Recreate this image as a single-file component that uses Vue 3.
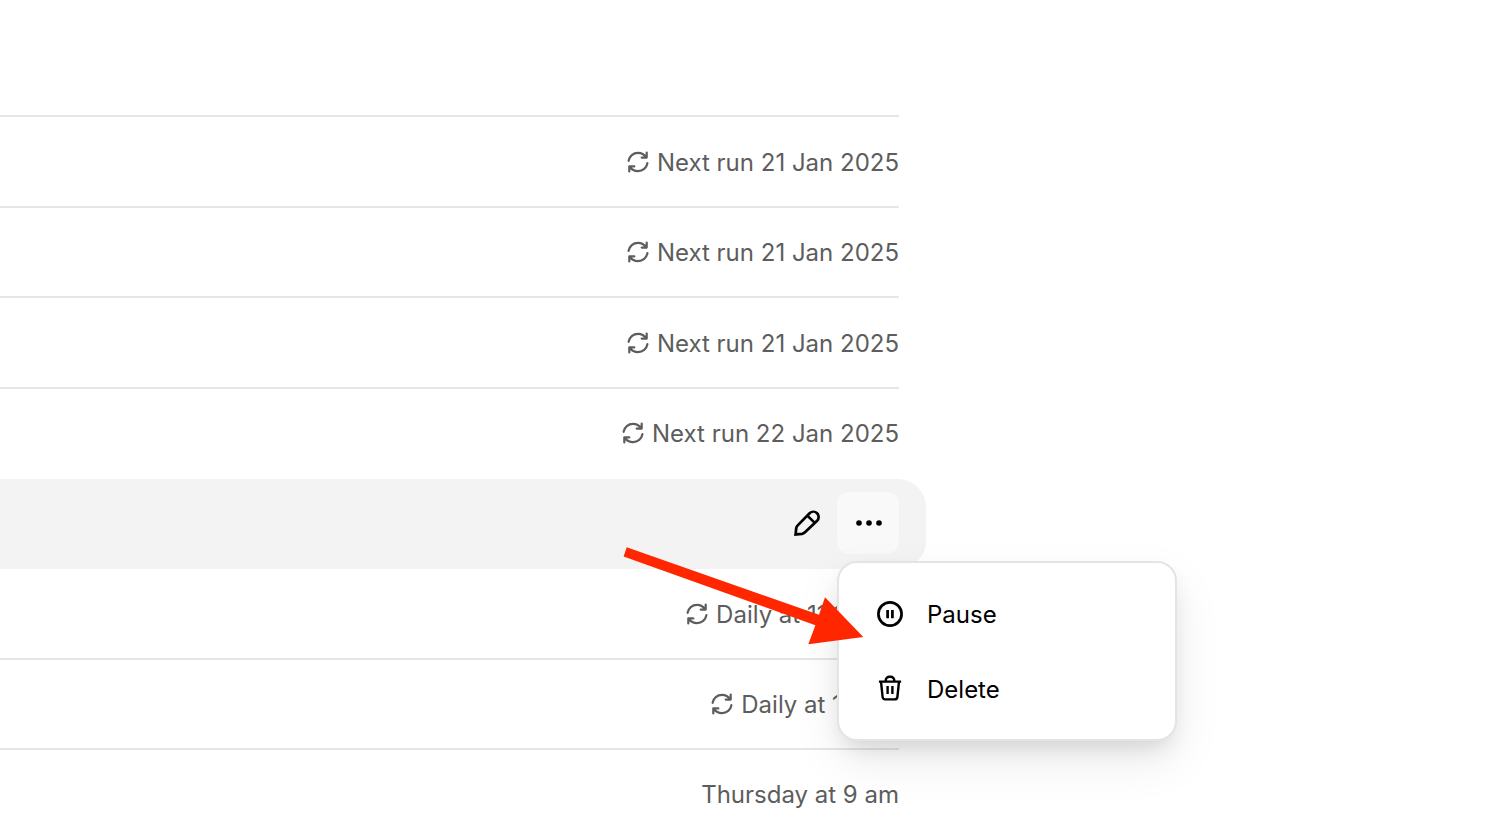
<script setup>
const rows = [
  { id: 1, label: 'Next run 21 Jan 2025', repeats: true, tall: true },
  { id: 2, label: 'Next run 21 Jan 2025', repeats: true },
  { id: 3, label: 'Next run 21 Jan 2025', repeats: true, tall: true },
  { id: 4, label: 'Next run 22 Jan 2025', repeats: true, plain: true },
  { id: 5, active: true },
  { id: 6, label: 'Daily at 11:15 am', repeats: true, tall: true },
  { id: 7, label: 'Daily at 12 pm', repeats: true },
  { id: 8, label: 'Thursday at 9 am', plain: true },
]
</script>

<template>
  <main class="page">
    <ul class="tasks">
      <li
        v-for="row in rows"
        :key="row.id"
        class="task"
        :class="{ tall: row.tall, plain: row.plain, active: row.active }"
      >
        <template v-if="!row.active">
          <svg v-if="row.repeats" class="repeat" viewBox="0 0 22 22" aria-hidden="true">
            <path d="M1.6 9.8C2.4 5.2 6.2 1.9 11 1.9c3.4 0 6.300 1.600 8 4.300M19.700 1.500v5.100h-5M20.400 12.200C19.600 16.800 15.800 20.100 11 20.100c-3.400 0-6.300-1.600-8-4.300M2.300 20.500v-5.100h5" />
          </svg>
          <span>{{ row.label }}</span>
        </template>
        <div v-else class="actions">
          <button type="button" class="icon-button" aria-label="Edit">
            <svg class="icon" viewBox="-1 0 28 28" aria-hidden="true">
              <path d="M2.600 25.400 3.200 19.500a5 5 0 0 1 1.500-3.100L16.600 4.300a5.200 5.200 0 0 1 7.500 7.500L11.700 23.500a5 5 0 0 1-2.600 1.300ZM14.300 6.600l7.500 7.300" />
            </svg>
          </button>
          <div class="more">
            <button type="button" class="icon-button open" aria-label="More options" aria-expanded="true">
              <svg class="icon dots" viewBox="-1 0 28 28" aria-hidden="true">
                <circle cx="4" cy="14" r="2.8" />
                <circle cx="14" cy="14" r="2.8" />
                <circle cx="24" cy="14" r="2.8" />
              </svg>
            </button>
            <div class="menu" role="menu">
              <button type="button" class="item" role="menuitem">
                <svg class="icon" viewBox="0 0 28 28" aria-hidden="true">
                  <circle cx="14" cy="14" r="11.6" />
                  <path d="M11.600 10v8.200M16.400 10v8.200" />
                </svg>
                Pause
              </button>
              <button type="button" class="item" role="menuitem">
                <svg class="icon bin" viewBox="0 0 28 28" aria-hidden="true">
                  <path d="M2.900 6.600h22.200M5 6.600l1.600 15.400a2.700 2.700 0 0 0 2.700 2.400h9.400a2.700 2.700 0 0 0 2.700-2.400L23 6.600M9.700 6.200v-.7a3.700 3.700 0 0 1 3.700-3.700h1.200a3.700 3.700 0 0 1 3.700 3.700v.7M11.600 10.900v8.200M16.400 10.900v8.200" />
                </svg>
                Delete
              </button>
            </div>
          </div>
        </div>
      </li>
    </ul>
    <svg class="arrow" viewBox="0 0 240 98" aria-hidden="true">
      <path d="M3.700 .3 196 67.700 202 50.300 240.300 90 185.300 97.300 192.400 78.200 .6 9.400Z" />
    </svg>
  </main>
</template>

<style>
body {
  margin: 0;
}
</style>

<style scoped>
.page {
  position: relative;
  box-sizing: border-box;
  height: 100vh;
  padding-top: 115px;
  overflow: hidden;
  background: #fff;
  color: #5d5d5d;
  font: 24px/32px Inter, "Liberation Sans", sans-serif;
}

.tasks {
  width: 899px;
  max-width: 100%;
  margin: 0;
  padding: 0;
  border-top: 2px solid #e6e6e6;
  list-style: none;
}

.task {
  display: flex;
  align-items: center;
  justify-content: flex-end;
  gap: 8px;
  box-sizing: border-box;
  height: 90px;
  padding-top: 2px;
  border-bottom: 2px solid #e6e6e6;
}

.tall {
  height: 91px;
}

.plain {
  border-color: transparent;
}

.active {
  margin-right: -27px;
  padding: 0 27px 0 0;
  border-color: #f3f3f3;
  border-radius: 0 28px 28px 0;
  background: #f3f3f3;
}

.repeat {
  width: 22px;
  height: 22px;
  margin-bottom: 2px;
  fill: none;
  stroke: currentColor;
  stroke-width: 2.2;
  stroke-linecap: round;
  stroke-linejoin: round;
}

.actions {
  display: flex;
}

.icon-button {
  display: grid;
  place-items: center;
  width: 62px;
  height: 62px;
  padding: 0;
  border: 0;
  border-radius: 12px;
  background: transparent;
  color: #000;
}

.open {
  background: #f9f9f9;
}

.icon {
  flex: none;
  width: 28px;
  height: 28px;
  fill: none;
  stroke: currentColor;
  stroke-width: 2.7;
}

.dots {
  fill: currentColor;
  stroke: none;
}

.bin {
  stroke-width: 2.4;
}

.more {
  position: relative;
}

.menu {
  position: absolute;
  z-index: 1;
  top: 69px;
  left: 0;
  box-sizing: border-box;
  width: 340px;
  padding: 14px 12px 12px;
  border: 2px solid #e4e4e4;
  border-radius: 20px;
  background: #fff;
  box-shadow: 0 20px 48px rgba(0, 0, 0, 0.08), 0 12px 24px -8px rgba(0, 0, 0, 0.14);
}

.item {
  display: flex;
  align-items: center;
  gap: 23px;
  width: 100%;
  height: 75px;
  padding: 0 25px;
  border: 0;
  background: transparent;
  color: #000;
  font: inherit;
  text-align: left;
}

.item .icon {
  margin-bottom: 2px;
}

.arrow {
  position: absolute;
  z-index: 2;
  top: 547px;
  left: 623px;
  width: 240px;
  height: 98px;
  overflow: visible;
  fill: #ff2600;
}
</style>
